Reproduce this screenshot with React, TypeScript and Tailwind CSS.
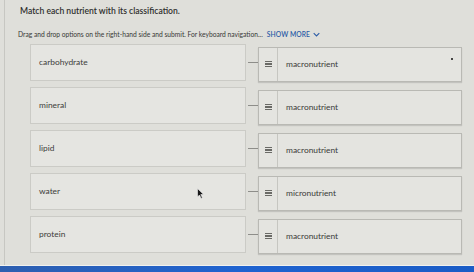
import React from "react";

const rows: { item: string; answer: string }[] = [
  { item: "carbohydrate", answer: "macronutrient" },
  { item: "mineral", answer: "macronutrient" },
  { item: "lipid", answer: "macronutrient" },
  { item: "water", answer: "micronutrient" },
  { item: "protein", answer: "macronutrient" },
];

function Handle() {
  return (
    <div className="w-[19px] h-full flex items-center justify-center border-r border-[#c6c6c1] shrink-0">
      <div className="flex flex-col gap-[1.5px]">
        <span className="block w-[7px] h-[1.2px] bg-[#6a6a66]" />
        <span className="block w-[7px] h-[1.2px] bg-[#6a6a66]" />
        <span className="block w-[7px] h-[1.2px] bg-[#6a6a66]" />
      </div>
    </div>
  );
}

export default function App() {
  return (
    <div className="w-[474px] h-[272px] bg-[#dfdfda] overflow-hidden relative flex flex-col font-['Lato','Noto_Sans',sans-serif]">
      <div className="flex-1 ml-[4px] border-l border-[#c7c7c2] flex flex-col">
        <p className="mt-[5px] ml-[15px] text-[8.6px] font-semibold text-[#2f2f2e] leading-[12px]">
          Match each nutrient with its classification.
        </p>
        <p className="mt-[12px] ml-[13px] text-[6.7px] text-[#383836] leading-[10px] flex items-center">
          Drag and drop options on the right-hand side and submit. For keyboard navigation...
          <span className="ml-[4px] font-semibold text-[#2b5ca6] tracking-[0.1px]">SHOW MORE</span>
          <svg width="7" height="5" viewBox="0 0 10 6" className="ml-[3px]" fill="none" stroke="#2b5ca6" strokeWidth="1.5">
            <path d="M1 1l4 4 4-4" />
          </svg>
        </p>

        <div className="mt-[5px] flex flex-col gap-[6px]">
          {rows.map((r, i) => (
            <div key={i} className="flex items-center h-[37px]">
              <div className="ml-[25px] w-[216px] h-full bg-[#e5e5e1] border border-[#cbcbc6] flex items-center pl-[8px]">
                <span className="text-[8.4px] text-[#3c3c3a]">{r.item}</span>
              </div>
              <div className="w-[2px]" />
              <div className="w-[10px] h-[1px] bg-[#8e8e8a]" />
              <div className="w-[204px] h-[35px] mt-[3px] bg-[#e4e4e0] border border-[#b9b9b4] shadow-[0_1px_1px_rgba(0,0,0,0.12)] flex items-center">
                <Handle />
                <span className="ml-[8px] text-[8.4px] text-[#3a3a38]">{r.answer}</span>
                {i === 0 && <span className="ml-auto mr-[8px] mb-[10px] w-[2px] h-[2px] bg-[#444]" />}
              </div>
            </div>
          ))}
        </div>
      </div>

      <div className="h-[1px] bg-[#f2f2ef]" />
      <div className="h-[6px] bg-gradient-to-r from-[#2d5fb0] via-[#1f63d0] to-[#1a5cc6]" />

      <svg className="absolute left-[197px] top-[188px]" width="7" height="11" viewBox="0 0 7 11">
        <path d="M0.5 0.5v8.5l2-2 1.6 3.4 1.3-0.6-1.6-3.3h2.8z" fill="#1a1a1a" stroke="#f4f4f4" strokeWidth="0.6" />
      </svg>
    </div>
  );
}
